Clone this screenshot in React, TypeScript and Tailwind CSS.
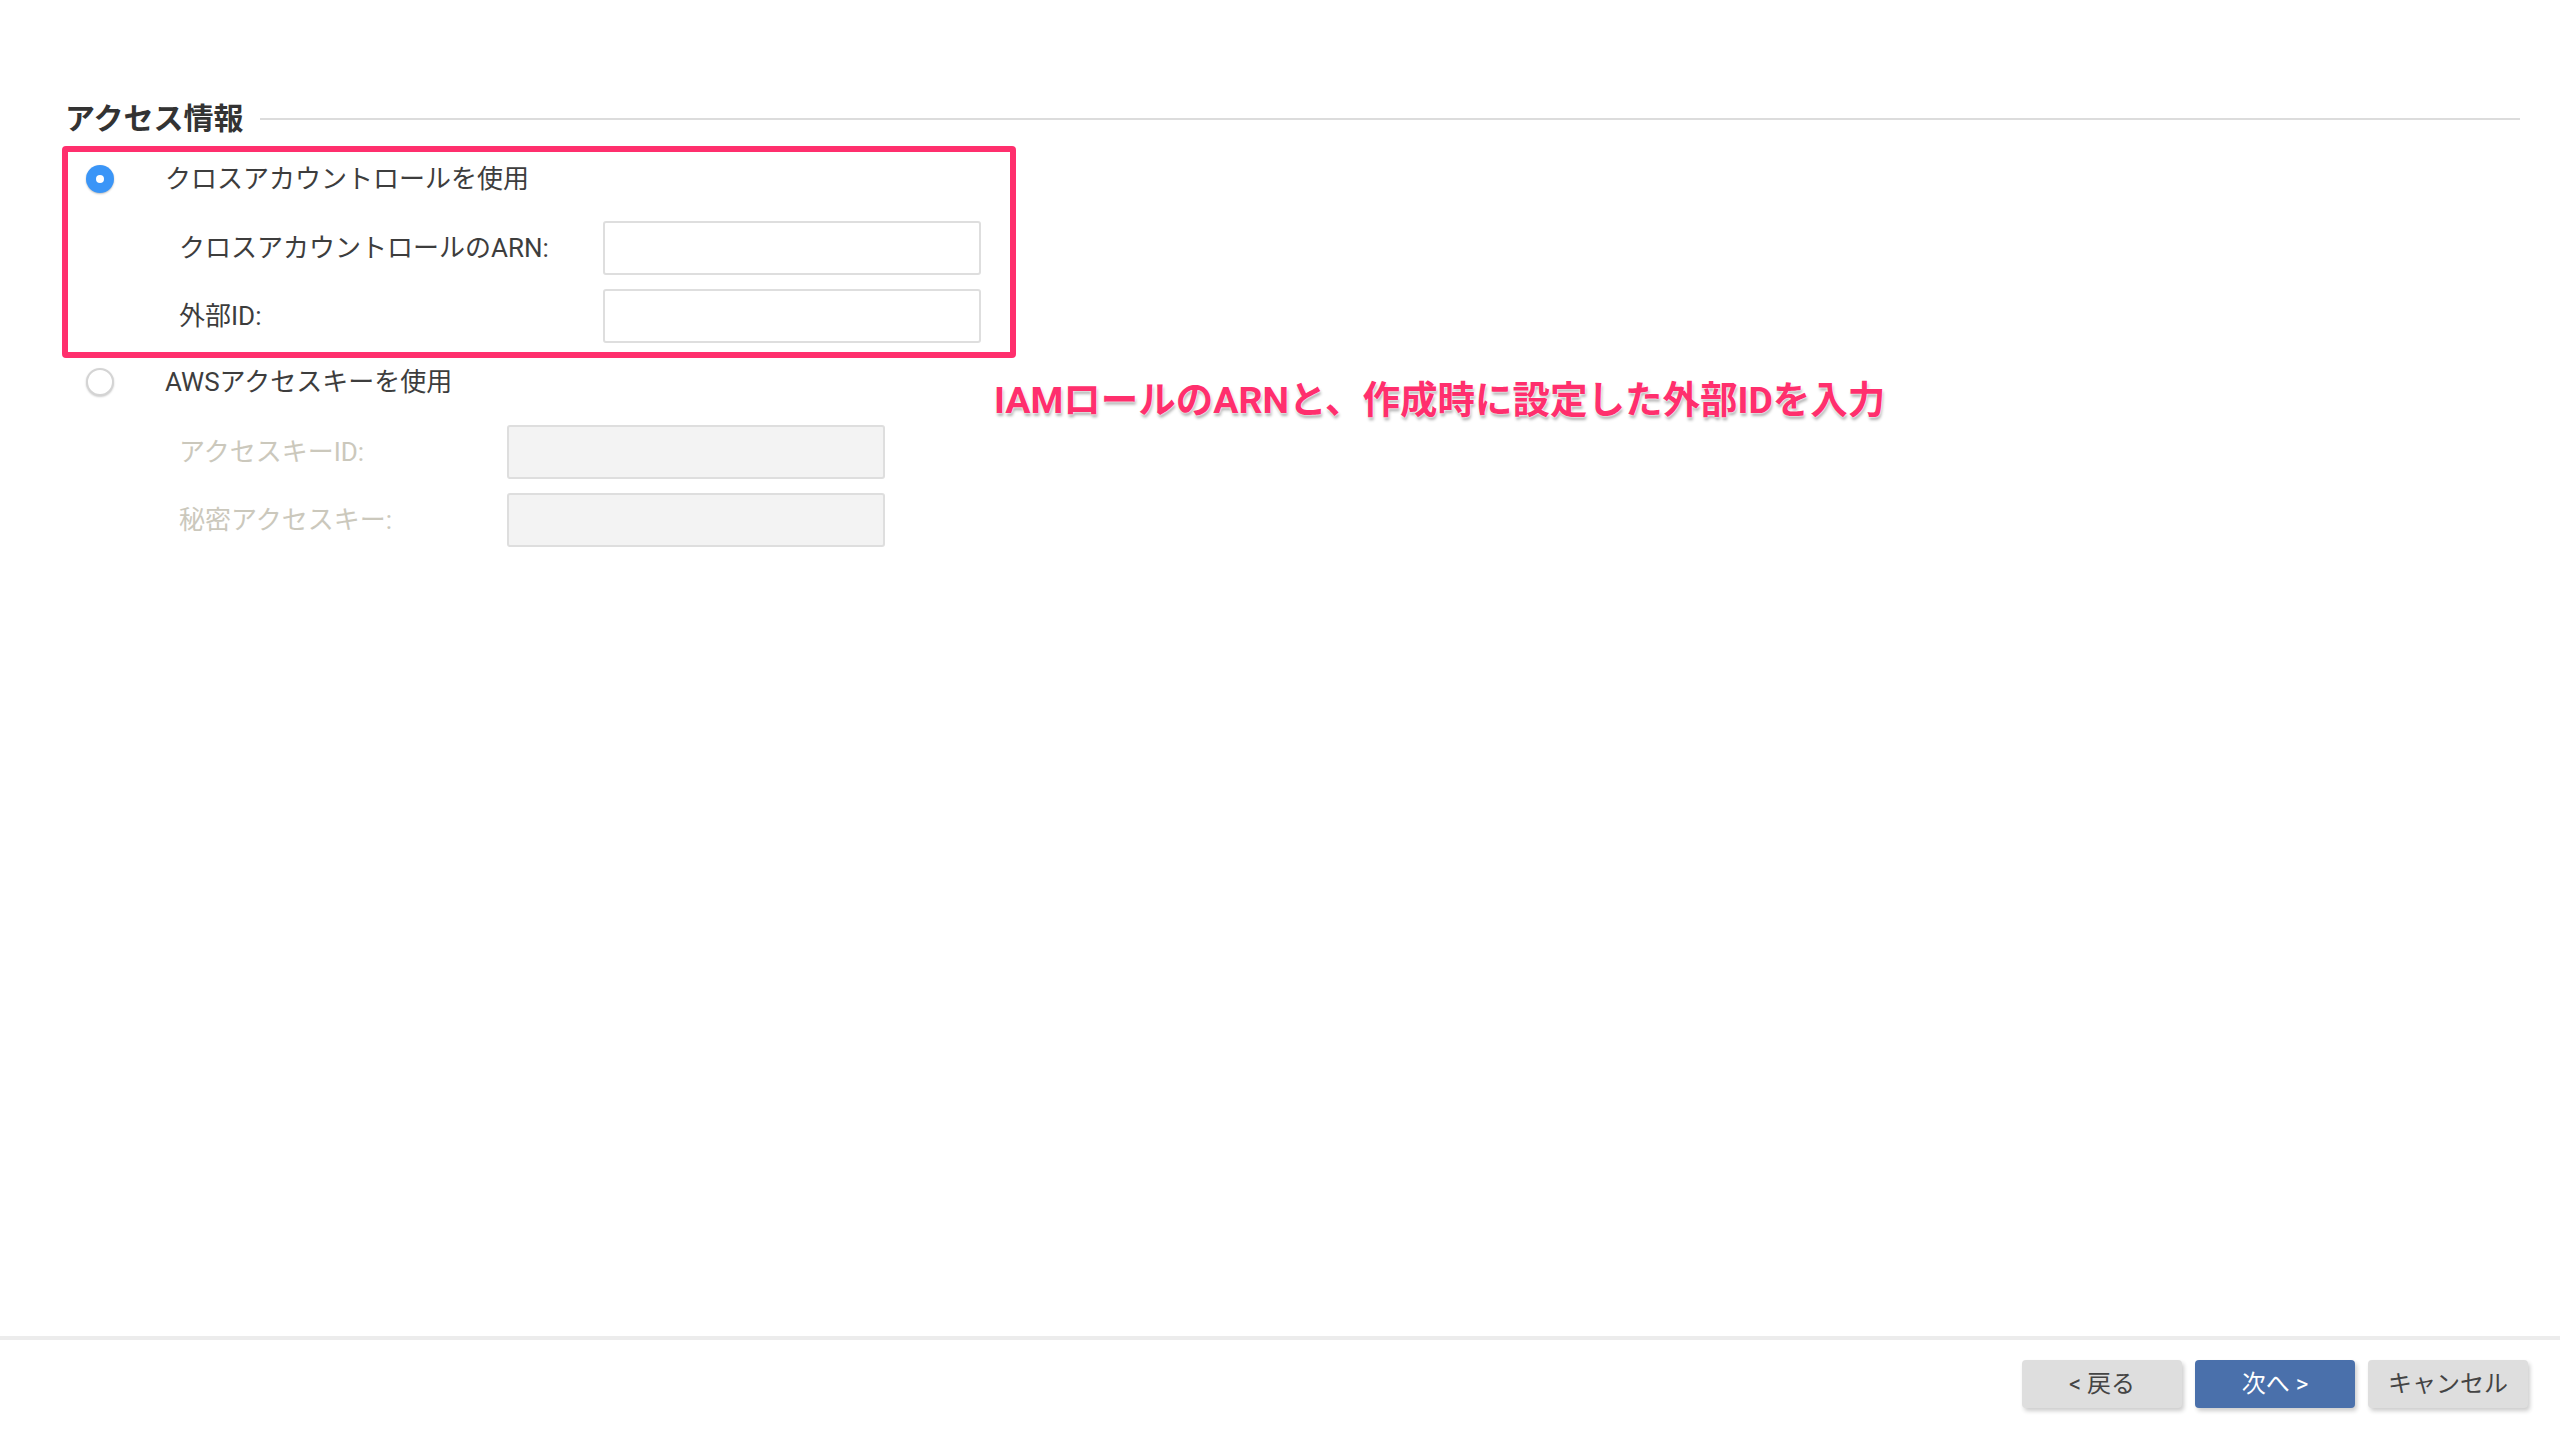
import React from "react";

type RadioProps = {
  checked?: boolean;
  label: string;
};

function RadioRow({ checked, label }: RadioProps) {
  return (
    <div className="flex h-[40px] items-center">
      {checked ? (
        <span className="flex h-[28px] w-[28px] items-center justify-center rounded-full bg-[#3a95f7] shadow-[0_1px_2px_rgba(0,0,0,0.25)]">
          <span className="h-[8px] w-[8px] rounded-full bg-white" />
        </span>
      ) : (
        <span className="h-[28px] w-[28px] rounded-full border-2 border-[#d4d4d4] bg-white shadow-[0_1px_2px_rgba(0,0,0,0.2)]" />
      )}
      <span className="ml-[51px] text-[26px] leading-[32px] text-[#3d3d3d]">{label}</span>
    </div>
  );
}

type FieldProps = {
  label: string;
  labelWidth: string;
  disabled?: boolean;
};

function Field({ label, labelWidth, disabled }: FieldProps) {
  return (
    <div className="flex items-center">
      <span
        className={`${labelWidth} text-[26px] leading-[32px] ${
          disabled ? "text-[#cbc8bc]" : "text-[#3d3d3d]"
        }`}
      >
        {label}
      </span>
      <input
        type="text"
        disabled={disabled}
        className={`h-[54px] w-[378px] rounded-[3px] border-2 border-[#dedede] outline-none ${
          disabled ? "bg-[#f3f3f3]" : "bg-white"
        }`}
      />
    </div>
  );
}

export default function App() {
  return (
    <div className="flex h-[1432px] w-full flex-col bg-white font-['Roboto','Noto_Sans_CJK_JP',sans-serif]">
      <main className="relative flex-1 pr-[40px] pt-[101px]">
        <div className="flex items-center pl-[65px]">
          <h2 className="h-[36px] text-[30px] font-bold leading-[36px] text-[#333333]">アクセス情報</h2>
          <div className="ml-[16px] h-[2px] flex-1 bg-[#dcdcdc]" />
        </div>

        <div className="ml-[62px] mt-[9px] w-[954px] rounded-[4px] border-[6px] border-[#ff2f6d] pb-[9px] pl-[18px] pt-[7px]">
          <RadioRow checked label="クロスアカウントロールを使用" />
          <div className="mt-[22px] flex flex-col gap-[14px] pl-[93px]">
            <Field label="クロスアカウントロールのARN:" labelWidth="w-[424px]" />
            <Field label="外部ID:" labelWidth="w-[424px]" />
          </div>
        </div>

        <div className="ml-[86px] mt-[4px]">
          <RadioRow label="AWSアクセスキーを使用" />
        </div>
        <div className="mt-[23px] flex flex-col gap-[14px] pl-[179px]">
          <Field label="アクセスキーID:" labelWidth="w-[328px]" disabled />
          <Field label="秘密アクセスキー:" labelWidth="w-[328px]" disabled />
        </div>

        <div className="absolute left-[994px] top-[378px] whitespace-nowrap text-[37.5px] font-bold leading-[44px] text-[#ff2f6d] [text-shadow:0_0_2px_#fff,0_0_2px_#fff,1px_3px_3px_rgba(0,0,0,0.3)]">
          IAMロールのARNと、作成時に設定した外部IDを入力
        </div>
      </main>

      <footer className="border-t-4 border-[#ececec] pb-[24px] pr-[32px] pt-[20px]">
        <div className="flex justify-end gap-[13px]">
          <button className="h-[48px] w-[160px] rounded-[4px] bg-[#dedede] text-[24px] text-[#444444] shadow-[2px_3px_4px_rgba(0,0,0,0.2)]">
            &lt; 戻る
          </button>
          <button className="h-[48px] w-[160px] rounded-[4px] bg-[#4a70ab] text-[24px] text-white shadow-[2px_3px_4px_rgba(0,0,0,0.2)]">
            次へ &gt;
          </button>
          <button className="h-[48px] w-[160px] rounded-[4px] bg-[#dedede] text-[24px] text-[#444444] shadow-[2px_3px_4px_rgba(0,0,0,0.2)]">
            キャンセル
          </button>
        </div>
      </footer>
    </div>
  );
}
